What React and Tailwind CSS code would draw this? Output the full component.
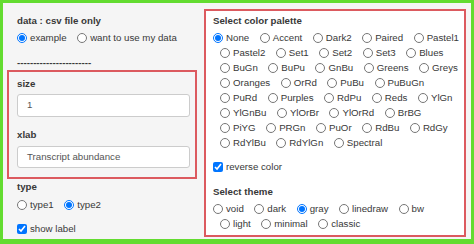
import React from 'react';

const paletteRows = [
  ['None', 'Accent', 'Dark2', 'Paired', 'Pastel1'],
  ['Pastel2', 'Set1', 'Set2', 'Set3', 'Blues'],
  ['BuGn', 'BuPu', 'GnBu', 'Greens', 'Greys'],
  ['Oranges', 'OrRd', 'PuBu', 'PuBuGn'],
  ['PuRd', 'Purples', 'RdPu', 'Reds', 'YlGn'],
  ['YlGnBu', 'YlOrBr', 'YlOrRd', 'BrBG'],
  ['PiYG', 'PRGn', 'PuOr', 'RdBu', 'RdGy'],
  ['RdYlBu', 'RdYlGn', 'Spectral'],
];

const themeRows = [
  ['void', 'dark', 'gray', 'linedraw', 'bw'],
  ['light', 'minimal', 'classic'],
];

const Radio = ({ name, label, checked, first }) => (
  <label className={`flex items-center h-[15px] mr-[3.5px] whitespace-nowrap ${first ? '' : 'ml-[7px]'}`}>
    <input type="radio" name={name} defaultChecked={checked} className="w-[10px] h-[10px] mr-[3px]" />
    <span>{label}</span>
  </label>
);

const Check = ({ label }) => (
  <label className="flex items-center h-[14px]">
    <input type="checkbox" defaultChecked className="w-[10px] h-[10px] mr-[3px]" />
    <span>{label}</span>
  </label>
);

// radio rows: first row flush, wrapped rows indented like inline radios
const RadioRows = ({ name, rows, selected }) => (
  <div>
    {rows.map((row, r) => (
      <div key={r} className={`flex ${r === 0 ? '' : 'pl-[7px]'}`}>
        {row.map((item, i) => (
          <Radio key={item} name={name} label={item} checked={item === selected} first={i === 0} />
        ))}
      </div>
    ))}
  </div>
);

export default function App() {
  return (
    <div className="w-[474px] h-[244px] bg-[#63dc30] pt-[3px] pl-[3px] pr-[3px] pb-[5px] font-['Liberation_Sans',Arial,sans-serif] text-[9.7px] text-[#383838]">
      <div className="flex h-full bg-[#f5f5f5]">
        {/* Sidebar */}
        <div className="w-[201px] shrink-0">
          <div className="pl-[14px] pt-[11px]">
            <div className="h-[14px] leading-[14px] font-bold">data : csv file only</div>
            <div className="flex mt-[2.5px]">
              <Radio name="data" label="example" checked first />
              <Radio name="data" label="want to use my data" />
            </div>
            <div className="mt-[10px] h-[14px] leading-[14px] font-bold">-----------------------</div>
          </div>

          <div className="ml-[4px] mt-[0.5px] w-[190px] border-2 border-[#dc5a5f] pl-[8px] pr-[5px] pt-[5px] pb-[9px]">
            <div className="h-[14px] leading-[14px] font-bold">size</div>
            <div className="mt-[3px] h-[23px] flex items-center bg-white border border-[#ccc] rounded-[3px] pl-[9px] text-[#555]">1</div>
            <div className="mt-[11px] h-[14px] leading-[14px] font-bold">xlab</div>
            <div className="mt-[4px] h-[22px] flex items-center bg-white border border-[#ccc] rounded-[3px] pl-[9px] text-[#555]">Transcript abundance</div>
          </div>

          <div className="pl-[14px]">
            <div className="mt-[1px] h-[14px] leading-[14px] font-bold">type</div>
            <div className="flex mt-[3.5px]">
              <Radio name="type" label="type1" first />
              <Radio name="type" label="type2" checked />
            </div>
            <div className="mt-[9.5px]">
              <Check label="show label" />
            </div>
          </div>
        </div>

        {/* Palette / theme panel */}
        <div className="mt-[6px] w-[262px] h-[228px] shrink-0 border-2 border-[#dc5a5f] bg-white pl-[7px] pt-[3px]">
          <div className="h-[14px] leading-[14px] font-bold">Select color palette</div>
          <div className="mt-[2.5px]">
            <RadioRows name="palette" rows={paletteRows} selected="None" />
          </div>
          <div className="mt-[9.5px]">
            <Check label="reverse color" />
          </div>
          <div className="mt-[11px] h-[14px] leading-[14px] font-bold">Select theme</div>
          <div className="mt-[2.5px]">
            <RadioRows name="theme" rows={themeRows} selected="gray" />
          </div>
        </div>
      </div>
    </div>
  );
}
